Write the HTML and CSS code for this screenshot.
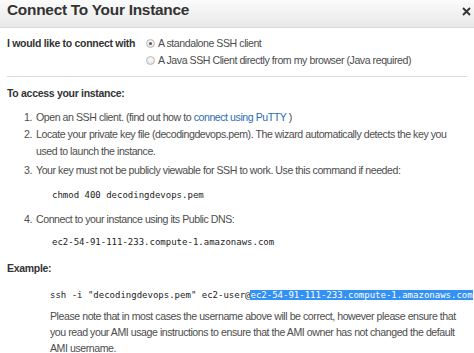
FILE: index.html
```html
<!DOCTYPE html>
<html>
<head>
<meta charset="utf-8">
<link rel="stylesheet" href="styles.css">
</head>
<body>
<div class="modal">
  <div class="header">
    <h1 class="title">Connect To Your Instance</h1>
    <span class="close"><svg width="9" height="9" viewBox="0 0 9 9"><path d="M1 1 L8 8 M8 1 L1 8" stroke="#333" stroke-width="1.8" fill="none"/></svg></span>
  </div>
  <div class="content">
    <div class="choose">
      <div class="choose-label">I would like to connect with</div>
      <div class="options">
        <div class="option"><span class="radio checked"></span>A standalone SSH client</div>
        <div class="option"><span class="radio"></span>A Java SSH Client directly from my browser (Java required)</div>
      </div>
    </div>
    <div class="divider"></div>
    <div class="heading h-access">To access your instance:</div>
    <div class="steps">
      <div class="step s1"><span class="num">1.</span><span class="txt">Open an SSH client. (find out how to <span class="link">connect using PuTTY</span> )</span></div>
      <div class="step s2"><span class="num">2.</span><span class="txt">Locate your private key file (decodingdevops.pem). The wizard automatically detects the key you<br>used to launch the instance.</span></div>
      <div class="step s3"><span class="num">3.</span><span class="txt">Your key must not be publicly viewable for SSH to work. Use this command if needed:</span></div>
      <div class="code c1">chmod 400 decodingdevops.pem</div>
      <div class="step s4"><span class="num">4.</span><span class="txt">Connect to your instance using its Public DNS:</span></div>
      <div class="code c2">ec2-54-91-111-233.compute-1.amazonaws.com</div>
    </div>
    <div class="heading h-example">Example:</div>
    <div class="example">
      <div class="code c3">ssh -i "decodingdevops.pem" ec2-user@<span class="sel">ec2-54-91-111-233.compute-1.amazonaws.com</span></div>
      <p class="note">Please note that in most cases the username above will be correct, however please ensure that<br>you read your AMI usage instructions to ensure that the AMI owner has not changed the default<br>AMI username.</p>
    </div>
  </div>
</div>
</body>
</html>
```

FILE: styles.css
```css
html, body {
  margin: 0;
  padding: 0;
  background: #fff;
}
body {
  font-family: "Liberation Sans", Arial, sans-serif;
  color: #4d4d4d;
}
.modal {
  width: 474px;
  height: 353px;
  overflow: hidden;
}
.header {
  height: 28px;
  box-sizing: border-box;
  display: flex;
  justify-content: space-between;
  align-items: flex-start;
  padding: 1px 3px 0 7px;
  background: linear-gradient(#fbfbfb, #e8e8e8);
  border-bottom: 1px solid #d8d8d8;
}
.title {
  margin: 0;
  font-size: 15.4px;
  line-height: 17px;
  font-weight: bold;
  color: #333;
  letter-spacing: -0.25px;
}
.close {
  display: block;
  margin-top: 6px;
  width: 9px;
  height: 9px;
}
.close svg {
  display: block;
}
.content {
  padding: 0 7px;
  font-size: 10.6px;
  line-height: 17px;
  letter-spacing: -0.45px;
}
.choose {
  display: flex;
  margin-top: 7px;
}
.choose-label {
  width: 139px;
  flex: none;
  font-weight: bold;
  font-size: 10.5px;
  letter-spacing: -0.3px;
  color: #333;
}
.option {
  display: flex;
  align-items: center;
  white-space: nowrap;
}
.radio {
  width: 9px;
  height: 9px;
  box-sizing: border-box;
  border: 1px solid #b9b9b9;
  border-radius: 50%;
  background: radial-gradient(circle at 50% 35%, #fdfdfd, #dcdcdc);
  margin-right: 3px;
  position: relative;
  flex: none;
}
.radio.checked::after {
  content: "";
  position: absolute;
  left: 2px;
  top: 2px;
  width: 3px;
  height: 3px;
  border-radius: 50%;
  background: #555;
}
.divider {
  margin-top: 7px;
  border-top: 1px solid #dcdcdc;
}
.heading {
  font-weight: bold;
  font-size: 10.5px;
  letter-spacing: -0.3px;
  color: #333;
}
.h-access {
  margin-top: 8px;
}
.steps {
  margin-top: 7px;
}
.step {
  display: flex;
  white-space: nowrap;
}
.num {
  width: 12px;
  margin-left: 17px;
  flex: none;
}
.s3 {
  margin-top: 2px;
}
.s4 {
  margin-top: 7px;
}
.link {
  color: #2b6cb3;
}
.code {
  font-family: "DejaVu Sans Mono", "Liberation Mono", monospace;
  font-size: 9px;
  letter-spacing: 0;
  color: #222;
  white-space: nowrap;
}
.c1 {
  margin-top: 8px;
  margin-left: 45px;
}
.c2 {
  margin-top: 6px;
  margin-left: 45px;
}
.h-example {
  margin-top: 9px;
}
.example {
  margin-left: 43px;
}
.c3 {
  margin-top: 10px;
}
.sel {
  background: #3391f5;
  color: #fff;
}
.note {
  margin: 4px 0 0;
  line-height: 16px;
  white-space: nowrap;
}
```
